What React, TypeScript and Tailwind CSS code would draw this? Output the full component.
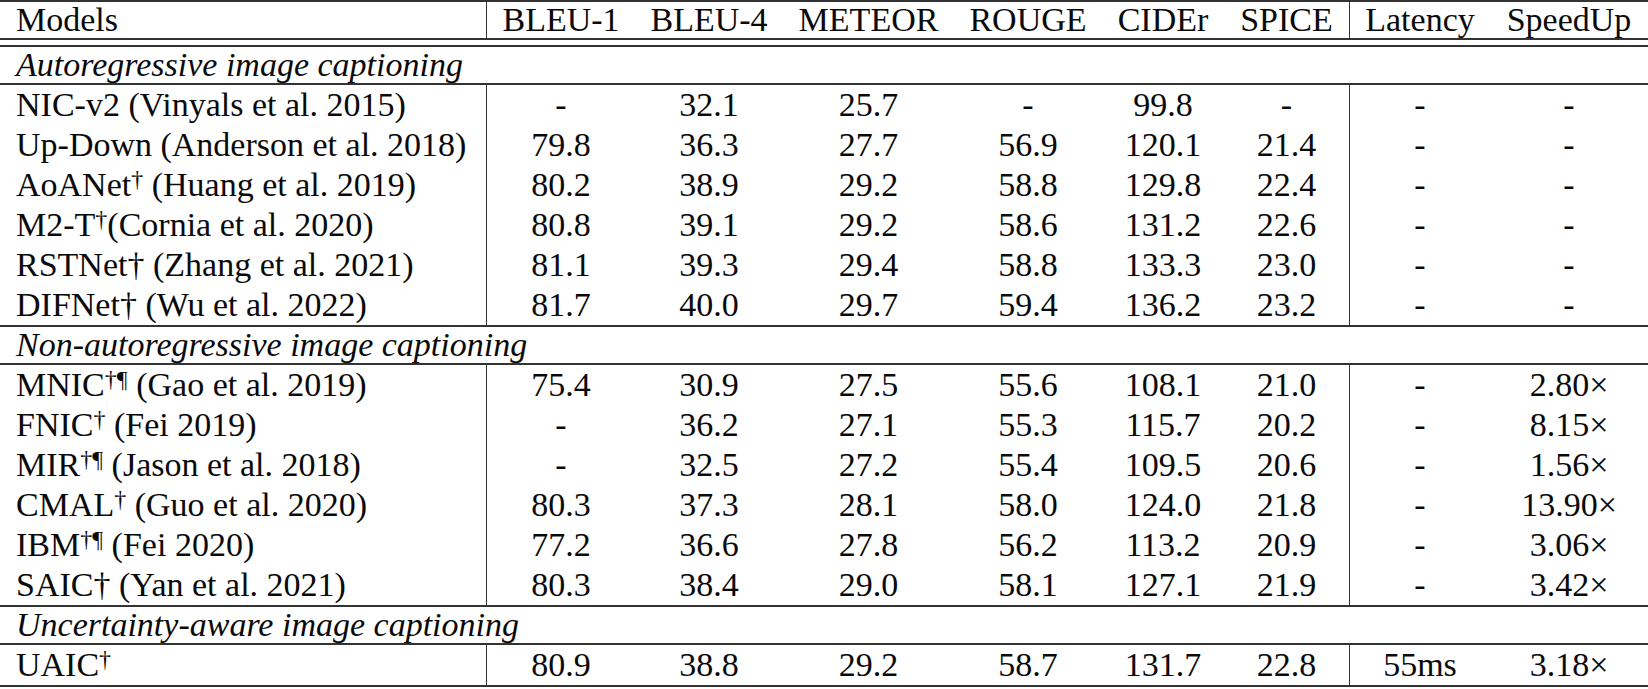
import React from 'react';

type Row = {
  name: React.ReactNode;
  vals: string[];
};

const grid = 'grid grid-cols-[487px_148px_148px_171px_148px_122px_126px_140px_158px]';
const cell = 'flex items-center justify-center h-full whitespace-nowrap';

const Sup = ({ children }: { children: React.ReactNode }) => (
  <sup className="text-[24px] relative -top-[9px]">{children}</sup>
);

const sections: { title: string; rows: Row[] }[] = [
  {
    title: 'Autoregressive image captioning',
    rows: [
      { name: 'NIC-v2 (Vinyals et al. 2015)', vals: ['-', '32.1', '25.7', '-', '99.8', '-', '-', '-'] },
      { name: 'Up-Down (Anderson et al. 2018)', vals: ['79.8', '36.3', '27.7', '56.9', '120.1', '21.4', '-', '-'] },
      { name: <>AoANet<Sup>†</Sup> (Huang et al. 2019)</>, vals: ['80.2', '38.9', '29.2', '58.8', '129.8', '22.4', '-', '-'] },
      { name: <>M2-T<Sup>†</Sup>(Cornia et al. 2020)</>, vals: ['80.8', '39.1', '29.2', '58.6', '131.2', '22.6', '-', '-'] },
      { name: 'RSTNet† (Zhang et al. 2021)', vals: ['81.1', '39.3', '29.4', '58.8', '133.3', '23.0', '-', '-'] },
      { name: 'DIFNet† (Wu et al. 2022)', vals: ['81.7', '40.0', '29.7', '59.4', '136.2', '23.2', '-', '-'] },
    ],
  },
  {
    title: 'Non-autoregressive image captioning',
    rows: [
      { name: <>MNIC<Sup>†¶</Sup> (Gao et al. 2019)</>, vals: ['75.4', '30.9', '27.5', '55.6', '108.1', '21.0', '-', '2.80×'] },
      { name: <>FNIC<Sup>†</Sup> (Fei 2019)</>, vals: ['-', '36.2', '27.1', '55.3', '115.7', '20.2', '-', '8.15×'] },
      { name: <>MIR<Sup>†¶</Sup> (Jason et al. 2018)</>, vals: ['-', '32.5', '27.2', '55.4', '109.5', '20.6', '-', '1.56×'] },
      { name: <>CMAL<Sup>†</Sup> (Guo et al. 2020)</>, vals: ['80.3', '37.3', '28.1', '58.0', '124.0', '21.8', '-', '13.90×'] },
      { name: <>IBM<Sup>†¶</Sup> (Fei 2020)</>, vals: ['77.2', '36.6', '27.8', '56.2', '113.2', '20.9', '-', '3.06×'] },
      { name: 'SAIC† (Yan et al. 2021)', vals: ['80.3', '38.4', '29.0', '58.1', '127.1', '21.9', '-', '3.42×'] },
    ],
  },
  {
    title: 'Uncertainty-aware image captioning',
    rows: [
      { name: <>UAIC<Sup>†</Sup></>, vals: ['80.9', '38.8', '29.2', '58.7', '131.7', '22.8', '55ms', '3.18×'] },
    ],
  },
];

const headers = ['BLEU-1', 'BLEU-4', 'METEOR', 'ROUGE', 'CIDEr', 'SPICE', 'Latency', 'SpeedUp'];

const DataRow = ({ row }: { row: Row }) => (
  <div className={`${grid} h-[40px]`}>
    <div className="flex items-center h-full pl-4 whitespace-nowrap border-r border-[#333]">
      <span>{row.name}</span>
    </div>
    {row.vals.map((v, i) => (
      <div key={i} className={`${cell} ${i === 5 ? 'border-r border-[#333]' : ''}`}>
        {v}
      </div>
    ))}
  </div>
);

export default function App() {
  return (
    <div className="font-serif">
      <div className="w-[1648px] h-[689px] bg-white text-[#0a0a0a] text-[34px] leading-none [font-family:Liberation_Serif,serif]">
        {/* Header */}
        <div className="border-t-2 border-[#333]">
          <div className={`${grid} h-[38px] border-b-2 border-[#333]`}>
            <div className="flex items-center h-full pl-4 border-r border-[#333]">Models</div>
            {headers.map((h, i) => (
              <div key={h} className={`${cell} ${i === 5 ? 'border-r border-[#333]' : ''}`}>
                {h}
              </div>
            ))}
          </div>
        </div>
        <div className="h-[5px]" />

        {sections.map((s) => (
          <div key={s.title}>
            <div className="h-[40px] flex items-center pl-4 italic border-t-2 border-b-2 border-[#333]">
              {s.title}
            </div>
            {s.rows.map((r, i) => (
              <DataRow key={i} row={r} />
            ))}
          </div>
        ))}
        <div className="border-t-2 border-[#333]" />
      </div>
    </div>
  );
}
